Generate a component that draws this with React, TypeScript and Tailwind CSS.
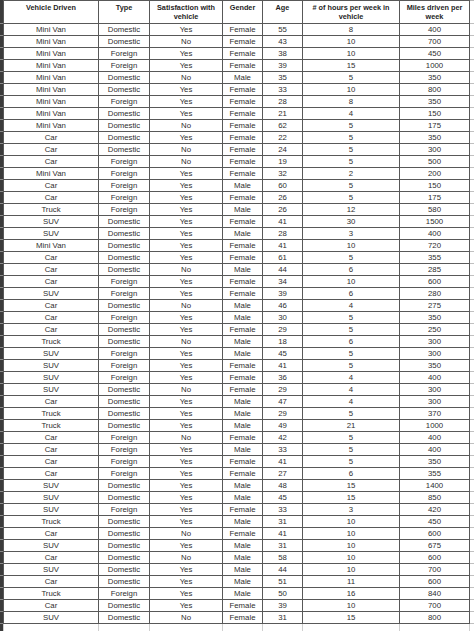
const rows: (string | number)[][] = [
  ["Mini Van", "Domestic", "Yes", "Female", 55, 8, 400],
  ["Mini Van", "Domestic", "No", "Female", 43, 10, 700],
  ["Mini Van", "Foreign", "Yes", "Female", 38, 10, 450],
  ["Mini Van", "Foreign", "Yes", "Female", 39, 15, 1000],
  ["Mini Van", "Domestic", "No", "Male", 35, 5, 350],
  ["Mini Van", "Domestic", "Yes", "Female", 33, 10, 800],
  ["Mini Van", "Foreign", "Yes", "Female", 28, 8, 350],
  ["Mini Van", "Domestic", "Yes", "Female", 21, 4, 150],
  ["Mini Van", "Domestic", "No", "Female", 62, 5, 175],
  ["Car", "Domestic", "Yes", "Female", 22, 5, 350],
  ["Car", "Domestic", "No", "Female", 24, 5, 300],
  ["Car", "Foreign", "No", "Female", 19, 5, 500],
  ["Mini Van", "Foreign", "Yes", "Female", 32, 2, 200],
  ["Car", "Foreign", "Yes", "Male", 60, 5, 150],
  ["Car", "Foreign", "Yes", "Female", 26, 5, 175],
  ["Truck", "Foreign", "Yes", "Male", 26, 12, 580],
  ["SUV", "Domestic", "Yes", "Female", 41, 30, 1500],
  ["SUV", "Domestic", "Yes", "Male", 28, 3, 400],
  ["Mini Van", "Domestic", "Yes", "Female", 41, 10, 720],
  ["Car", "Domestic", "Yes", "Female", 61, 5, 355],
  ["Car", "Domestic", "No", "Male", 44, 6, 285],
  ["Car", "Foreign", "Yes", "Female", 34, 10, 600],
  ["SUV", "Foreign", "Yes", "Female", 39, 6, 280],
  ["Car", "Domestic", "No", "Male", 46, 4, 275],
  ["Car", "Foreign", "Yes", "Male", 30, 5, 350],
  ["Car", "Domestic", "Yes", "Female", 29, 5, 250],
  ["Truck", "Domestic", "No", "Male", 18, 6, 300],
  ["SUV", "Foreign", "Yes", "Male", 45, 5, 300],
  ["SUV", "Foreign", "Yes", "Female", 41, 5, 350],
  ["SUV", "Foreign", "Yes", "Female", 36, 4, 400],
  ["SUV", "Domestic", "No", "Female", 29, 4, 300],
  ["Car", "Domestic", "Yes", "Male", 47, 4, 300],
  ["Truck", "Domestic", "Yes", "Male", 29, 5, 370],
  ["Truck", "Domestic", "Yes", "Male", 49, 21, 1000],
  ["Car", "Foreign", "No", "Female", 42, 5, 400],
  ["Car", "Foreign", "Yes", "Male", 33, 5, 400],
  ["Car", "Foreign", "Yes", "Female", 41, 5, 350],
  ["Car", "Foreign", "Yes", "Female", 27, 6, 355],
  ["SUV", "Domestic", "Yes", "Male", 48, 15, 1400],
  ["SUV", "Domestic", "Yes", "Male", 45, 15, 850],
  ["SUV", "Foreign", "Yes", "Female", 33, 3, 420],
  ["Truck", "Domestic", "Yes", "Male", 31, 10, 450],
  ["Car", "Domestic", "No", "Female", 41, 10, 600],
  ["SUV", "Domestic", "Yes", "Male", 31, 10, 675],
  ["Car", "Domestic", "No", "Male", 58, 10, 600],
  ["SUV", "Domestic", "Yes", "Male", 44, 10, 700],
  ["Car", "Domestic", "Yes", "Male", 51, 11, 600],
  ["Truck", "Foreign", "Yes", "Male", 50, 16, 840],
  ["Car", "Domestic", "Yes", "Female", 39, 10, 700],
  ["SUV", "Domestic", "No", "Female", 31, 15, 800],
];

const headers: string[][] = [
  ["Vehicle Driven"],
  ["Type"],
  ["Satisfaction with", "vehicle"],
  ["Gender"],
  ["Age"],
  ["# of hours per week in", "vehicle"],
  ["Miles driven per", "week"],
];

const grid = "grid grid-cols-[3px_96px_51px_73px_40px_40px_97px_70px_4px]";

export default function App() {
  return (
    <div className="w-[474px] h-[631px] overflow-hidden bg-white font-['Liberation_Sans',Arial,sans-serif]">
      {/* Header */}
      <div className={`${grid} h-[24px]`}>
        <div className="bg-[#3b3b3b] border-b border-[#8a8a8a]" />
        {headers.map((h, i) => (
          <div
            key={i}
            className={`border-t border-b border-r border-[#585858] pt-[2px] text-center text-[7.3px] font-bold leading-[9px] text-[#1f1f1f] ${
              i === 0 ? "border-l" : ""
            }`}
          >
            {h.map((line, j) => (
              <div key={j}>{line}</div>
            ))}
          </div>
        ))}
        <div className="border-t border-b border-[#c0c0c0]" />
      </div>

      {/* Rows */}
      {rows.map((r, ri) => (
        <div key={ri} className={`${grid} h-[12px]`}>
          <div className="bg-[#3b3b3b] border-b border-[#8a8a8a]" />
          {r.map((c, ci) => (
            <div
              key={ci}
              className={`flex items-center justify-center border-b border-r border-[#585858] text-[7.8px] leading-none text-[#2e2e2e] ${
                ci === 0 ? "border-l" : ""
              }`}
            >
              {c}
            </div>
          ))}
          <div className="border-b border-[#c0c0c0]" />
        </div>
      ))}

      {/* Empty trailing row */}
      <div className={`${grid} h-[12px]`}>
        <div className="bg-[#3b3b3b]" />
        {headers.map((_, i) => (
          <div
            key={i}
            className={`border-r border-[#cfcfcf] ${i === 0 ? "border-l" : ""}`}
          />
        ))}
        <div />
      </div>
    </div>
  );
}
